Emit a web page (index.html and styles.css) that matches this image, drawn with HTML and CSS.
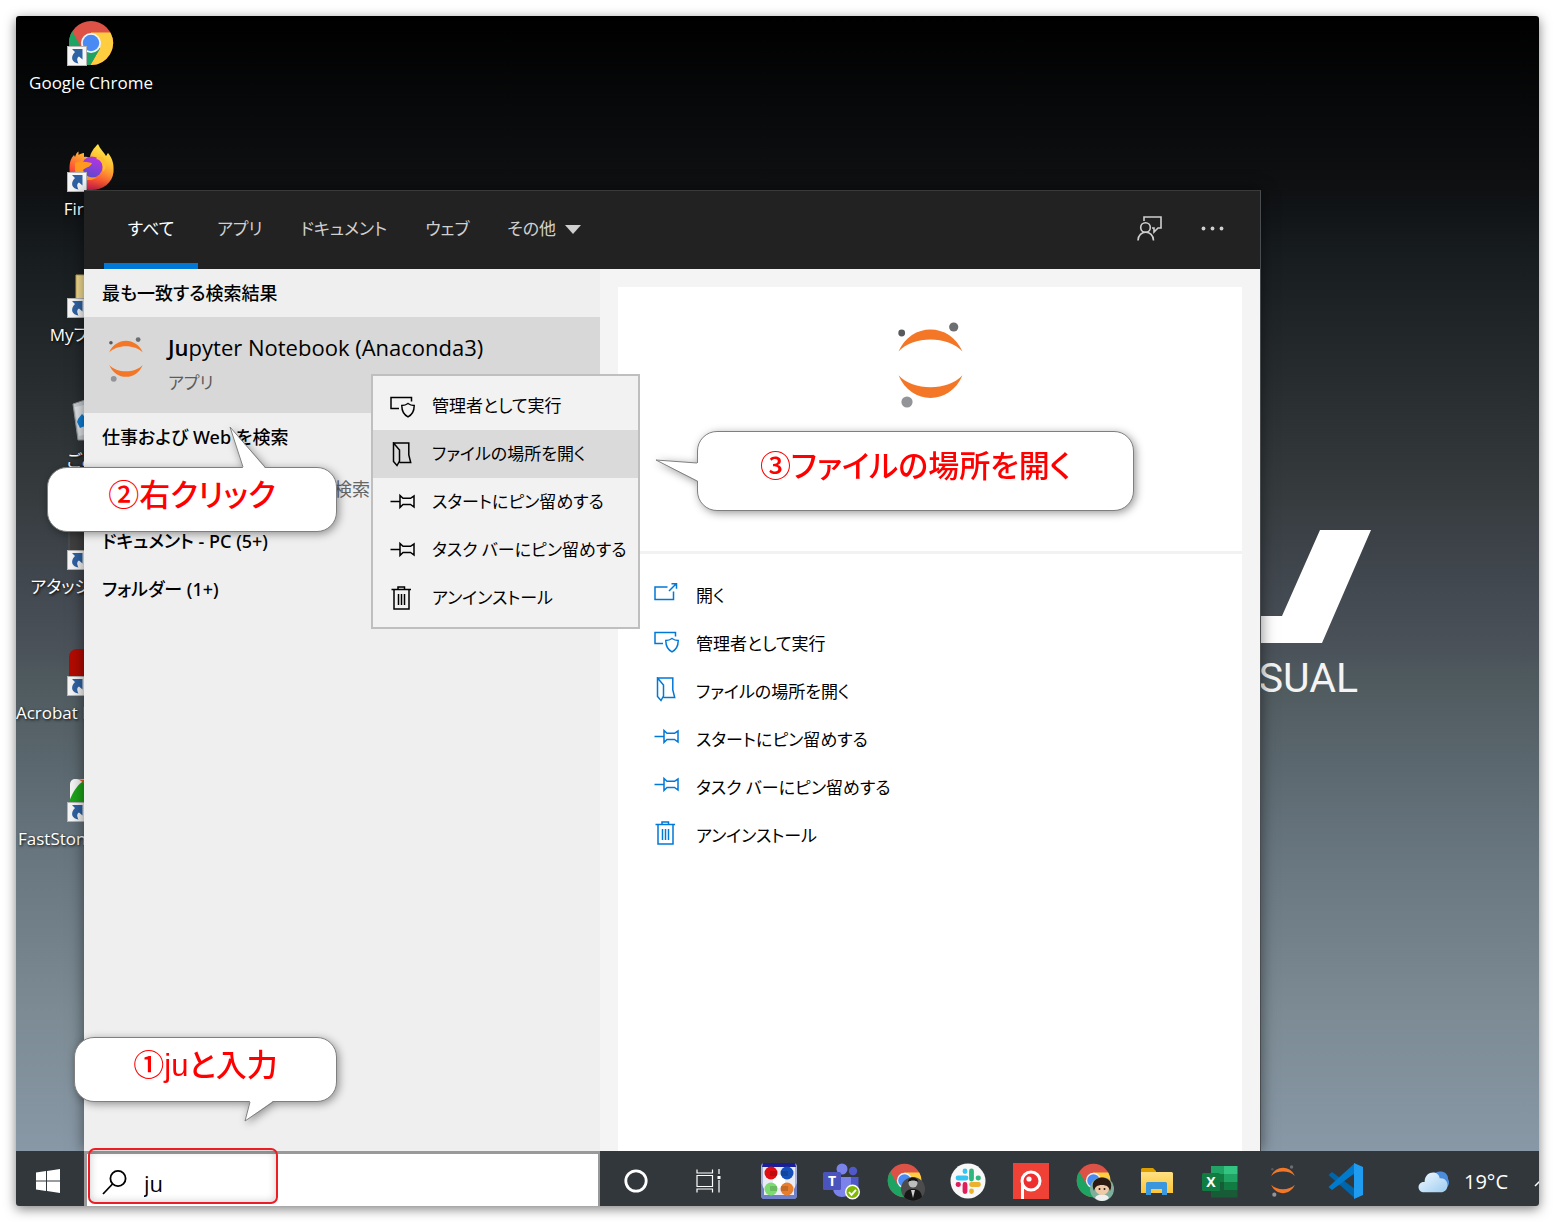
FILE: index.html
```html
<!DOCTYPE html>
<html lang="ja">
<head>
    <meta charset="UTF-8">
    <meta name="viewport" content="width=device-width, initial-scale=1.0">
    <title>Jupyter Notebook の場所を開く</title>
    <link rel="stylesheet" href="styles.css">
</head>
<body>
    <!-- Shared icons -->
    <svg class="sprite" width="0" height="0" aria-hidden="true">
        <defs>
            <linearGradient id="fox" x1="0.8" y1="0" x2="0.3" y2="1">
                <stop offset="0" stop-color="#fff44f"/>
                <stop offset="0.35" stop-color="#ffb932"/>
                <stop offset="0.7" stop-color="#ff5634"/>
                <stop offset="1" stop-color="#e0115f"/>
            </linearGradient>
            <linearGradient id="globe" x1="0.7" y1="0" x2="0.3" y2="1">
                <stop offset="0" stop-color="#b833e1"/>
                <stop offset="1" stop-color="#5b4ad0"/>
            </linearGradient>
            <linearGradient id="cloud" x1="0" y1="0" x2="1" y2="1">
                <stop offset="0" stop-color="#f2faff"/>
                <stop offset="1" stop-color="#9cccf0"/>
            </linearGradient>
            <linearGradient id="folder" x1="0" y1="0" x2="0" y2="1">
                <stop offset="0" stop-color="#ffe083"/>
                <stop offset="1" stop-color="#fcc535"/>
            </linearGradient>
        </defs>
        <symbol id="i-shortcut" viewBox="0 0 20 20">
            <rect x="0.5" y="0.5" width="19" height="19" fill="#f6f6f6" stroke="#b5b5b5"/>
            <path d="M5 3h10.500v10.500l-3.500-3c-2.500 1.500-2 4-.5 7-6-.5-9-6-3.500-11.500z" fill="#2f62a3"/>
        </symbol>
        <symbol id="i-chrome" viewBox="0 0 48 48">
            <circle cx="24" cy="24" r="23" fill="#dc5247"/>
            <path d="M44.200 13A23 23 0 0 1 23.400 47L33.500 29.500 24 24V13z" fill="#ffcd40"/>
            <path d="M23.400 47A23 23 0 0 1 4.400 12L14.500 29.500 24 24l9.500 5.500z" fill="#1da462"/>
            <circle cx="24" cy="24" r="10.500" fill="#f4f4f4"/>
            <circle cx="24" cy="24" r="8.600" fill="#4a8af4"/>
        </symbol>
        <symbol id="i-jupyter" viewBox="0 0 65 86">
            <path d="M0.500 29.500C13 0 52 0 64.500 29.500 50 13.500 15 13.500 0.500 29.500z" fill="#f37726"/>
            <path d="M0.500 53.300C13 83.600 52 83.600 64.500 53.300 50 69.300 15 69.300 0.500 53.300z" fill="#f37726"/>
            <circle cx="3.700" cy="11" r="3.400" fill="#58595b"/>
            <circle cx="55.700" cy="5" r="4.600" fill="#6d6e71"/>
            <circle cx="9" cy="80" r="5.600" fill="#929497"/>
        </symbol>
        <symbol id="i-open" viewBox="0 0 25 25">
            <path d="M13.500 6H1v12.500h18.500V10.500M15 10l7-7M17.500 2.700h5v5"/>
        </symbol>
        <symbol id="i-admin" viewBox="0 0 25 25">
            <path d="M21.500 7.500V3.500H1v11h8M18 9.500c-2 1.500-4 2-6.200 2 0 5 1.500 9 6.200 11.300 4.700-2.300 6.200-6.300 6.200-11.300-2.200 0-4.200-.5-6.200-2z"/>
        </symbol>
        <symbol id="i-location" viewBox="0 0 25 25">
            <path d="M3.500 1h15.300v12l1.900 7.500H9.500M3.500 1v18.500l3.500 4 2.500-4.500V8z"/>
        </symbol>
        <symbol id="i-pin" viewBox="0 0 25 25">
            <path d="M0.500 11.500H10M10 5.500v12l3-3h7.500l3.500 2.500V6l-3.500 2.300H13z"/>
        </symbol>
        <symbol id="i-trash" viewBox="0 0 25 25">
            <path d="M1.500 3.500h19.500M8 3.500V1h6.500v2.500M4 3.500v19.500h15v-19.500M8.500 8v11M11.500 8v11M14.500 8v11"/>
        </symbol>
    </svg>

    <div class="screen">
        <div class="desktop">
            <div class="wallpaper-logo">
                <svg width="131" height="114" viewBox="0 0 131 114"><path d="M80 0h51L82 113H0V86h42z" fill="#fff"/></svg>
                <span>VISUAL</span>
            </div>

            <ul class="shortcuts">
                <li>
                    <span class="shortcut-icon">
                        <svg width="46" height="46"><use href="#i-chrome"/></svg>
                        <svg class="arrow" width="20" height="20"><use href="#i-shortcut"/></svg>
                    </span>
                    <span>Google Chrome</span>
                </li>
                <li>
                    <span class="shortcut-icon">
                        <svg width="46" height="46" viewBox="0 0 46 46">
                            <path d="M1.500 23C1.500 16 3 12 6 9l1 2c1-3 2-5 3.500-5.500V9C12 8 14 7 16 7v4c3-1 6 1 6 1 0-5 4-10 8-14 2 5 6 8 8 12 1-1 1-2 2-3 5 6 6 12 5.500 19-1 11-11 18-22 18C10 44 1.500 35 1.500 23z" fill="url(#fox)"/>
                            <circle cx="24" cy="21" r="10.500" fill="url(#globe)"/>
                            <path d="M7 17c5-3 11-1 17 0-1 4-6 4-9 7 2 6 8 9 14 7-6 6-19 3-22-6z" fill="#ff9a1f"/>
                            <path d="M28 13c6 1 8 7 7 13 3-3 4-8 1-13-2-3-5-3-8 0z" fill="#ffbd2f"/>
                        </svg>
                        <svg class="arrow" width="20" height="20"><use href="#i-shortcut"/></svg>
                    </span>
                    <span>Firefox</span>
                </li>
                <li>
                    <span class="shortcut-icon">
                        <svg width="46" height="46" viewBox="0 0 46 46"><path d="M8 3h8l3 4h20v37H8z" fill="#f3dd92" stroke="#c9a95a"/></svg>
                        <svg class="arrow" width="20" height="20"><use href="#i-shortcut"/></svg>
                    </span>
                    <span>Myフォルダ</span>
                </li>
                <li>
                    <span class="shortcut-icon">
                        <svg width="46" height="46" viewBox="0 0 46 46">
                            <path d="M5 6l12-4 24 4-5 36H10z" fill="#c9ced2" stroke="#8e959a"/>
                            <path d="M7 9l9-2v30l-5 1z" fill="#e3e7ea"/>
                            <path d="M10 21l4-5 5 5-3 1 1 6-5 2-3-6z" fill="#0f7fd6"/>
                        </svg>
                    </span>
                    <span>ごみ箱</span>
                </li>
                <li>
                    <span class="shortcut-icon">
                        <svg width="46" height="46" viewBox="0 0 46 46"><path d="M1 3h44v40H1z" fill="#3f3f3f" stroke="#555"/></svg>
                        <svg class="arrow" width="20" height="20"><use href="#i-shortcut"/></svg>
                    </span>
                    <span>アタッシュケース</span>
                </li>
                <li>
                    <span class="shortcut-icon">
                        <svg width="46" height="46" viewBox="0 0 46 46"><rect x="1" y="-1" width="44" height="45" rx="8" fill="#b30b00"/></svg>
                        <svg class="arrow" width="20" height="20"><use href="#i-shortcut"/></svg>
                    </span>
                    <span>Acrobat Reader DC</span>
                </li>
                <li>
                    <span class="shortcut-icon">
                        <svg width="46" height="46" viewBox="0 0 46 46">
                            <rect x="2" y="3" width="42" height="42" rx="5" fill="#f5f5f5"/>
                            <path d="M1 26C5 15 10 8 17 4v22z" fill="#1da41b"/>
                            <path d="M9 3l8 1v6c-2-4-4-6-8-7z" fill="#f15a24"/>
                        </svg>
                        <svg class="arrow" width="20" height="20"><use href="#i-shortcut"/></svg>
                    </span>
                    <span>FastStone Capture</span>
                </li>
            </ul>

            <section class="search-window">
                <header class="search-header">
                    <nav class="tabs">
                        <button class="tab active">すべて</button>
                        <button class="tab">アプリ</button>
                        <button class="tab">ドキュメント</button>
                        <button class="tab">ウェブ</button>
                        <button class="tab">その他 <svg width="16" height="9" viewBox="0 0 16 9"><path d="M0 0h16L8 9z" fill="currentColor"/></svg></button>
                    </nav>
                    <button class="header-button" aria-label="フィードバック">
                        <svg width="25" height="25" viewBox="0 0 25 25" fill="none" stroke="currentColor" stroke-width="1.600">
                            <path d="M7 5V1h17v11h-3l-4 4v-4h-2"/>
                            <circle cx="8.500" cy="11.500" r="4.800"/>
                            <path d="M1 24.500c0-11 15.500-11 15.500 0"/>
                        </svg>
                    </button>
                    <button class="header-button" aria-label="オプション">
                        <svg width="23" height="5" viewBox="0 0 23 5" fill="currentColor"><circle cx="2.500" cy="2.500" r="1.900"/><circle cx="11.500" cy="2.500" r="1.900"/><circle cx="20.500" cy="2.500" r="1.900"/></svg>
                    </button>
                </header>

                <div class="search-body">
                    <div class="results">
                        <h2>最も一致する検索結果</h2>
                        <button class="best-match">
                            <svg width="34" height="45"><use href="#i-jupyter"/></svg>
                            <span class="best-text">
                                <span class="best-name"><b>Ju</b>pyter Notebook (Anaconda3)</span>
                                <span class="best-type">アプリ</span>
                            </span>
                        </button>
                        <h2>仕事および Web を検索</h2>
                        <button class="web-result">ju - 職場と Web を検索</button>
                        <h2>ドキュメント - PC (5+)</h2>
                        <h2>フォルダー (1+)</h2>
                    </div>

                    <div class="details">
                        <div class="card">
                            <div class="card-head">
                                <svg width="65" height="86"><use href="#i-jupyter"/></svg>
                            </div>
                            <ul class="actions">
                                <li><button><svg><use href="#i-open"/></svg>開く</button></li>
                                <li><button><svg><use href="#i-admin"/></svg>管理者として実行</button></li>
                                <li><button><svg><use href="#i-location"/></svg>ファイルの場所を開く</button></li>
                                <li><button><svg><use href="#i-pin"/></svg>スタートにピン留めする</button></li>
                                <li><button><svg><use href="#i-pin"/></svg>タスク バーにピン留めする</button></li>
                                <li><button><svg><use href="#i-trash"/></svg>アンインストール</button></li>
                            </ul>
                        </div>
                    </div>
                </div>

                <ul class="context-menu">
                    <li><button><svg><use href="#i-admin"/></svg>管理者として実行</button></li>
                    <li><button class="selected"><svg><use href="#i-location"/></svg>ファイルの場所を開く</button></li>
                    <li><button><svg><use href="#i-pin"/></svg>スタートにピン留めする</button></li>
                    <li><button><svg><use href="#i-pin"/></svg>タスク バーにピン留めする</button></li>
                    <li><button><svg><use href="#i-trash"/></svg>アンインストール</button></li>
                </ul>
            </section>
        </div>

        <footer class="taskbar">
            <button class="start" aria-label="スタート">
                <svg width="24" height="24" viewBox="0 0 24 24" fill="#fff"><path d="M0 3.500L10 2v9.500H0zM11 1.900L24 0v11.500H11zM0 12.500h10V22L0 20.500zM11 12.500h13V24l-13-1.900z"/></svg>
            </button>
            <label class="search-box">
                <svg width="25" height="25" viewBox="0 0 25 25" fill="none" stroke="#000" stroke-width="1.800"><circle cx="16" cy="8.500" r="7.600"/><path d="M10.500 14L1 24"/></svg>
                <input type="text" value="ju" aria-label="検索">
            </label>
            <button class="system" aria-label="Cortana">
                <svg width="24" height="24" viewBox="0 0 24 24"><circle cx="12" cy="12" r="10.200" fill="none" stroke="#fff" stroke-width="2.800"/></svg>
            </button>
            <button class="system" aria-label="タスク ビュー">
                <svg width="25" height="24" viewBox="0 0 25 24" fill="none" stroke="#fff" stroke-width="1.200"><path d="M1 0.500V4h15.500V0.500M1 6.500h15.500v11H1zM1 23.500V20h15.500v3.500M23 0v5M23 11v12.500"/><path d="M21.500 7h3v3h-3z" fill="#fff" stroke="none"/></svg>
            </button>
            <div class="apps">
                <button aria-label="ペイント">
                    <svg width="36" height="36" viewBox="0 0 36 36">
                        <rect x="1" y="1" width="34" height="34" rx="3" fill="#e9ecf6" stroke="#a9b3dc" stroke-width="2"/>
                        <path d="M2 0h32l1 4H1z" fill="#1a1f98"/>
                        <path d="M0 20l3 6v6h30v-6l3-6v12q0 4-3 4H3q-3 0-3-4z" fill="#6f80c6"/>
                        <path d="M12 12h12v13H12z" fill="#fff"/>
                        <circle cx="10" cy="10" r="6.500" fill="#e00d12"/><circle cx="26" cy="10" r="6.500" fill="#1450b8"/>
                        <circle cx="10" cy="26" r="6.500" fill="#7ddb70"/><circle cx="26" cy="26" r="6.500" fill="#e87d2c"/>
                        <path d="M9 8h7v5H9zM20 8h7v5h-7zM9 23h7v5H9zM20 23h7v5h-7z" fill="#000" opacity="0.150"/>
                    </svg>
                </button>
                <button aria-label="Teams">
                    <svg width="37" height="36" viewBox="0 0 37 36">
                        <circle cx="30" cy="8" r="4.200" fill="#5059c9"/>
                        <path d="M24 14h11.500v11c0 5-6 6-11.500 3z" fill="#5059c9"/>
                        <circle cx="19" cy="6" r="5.500" fill="#7b83eb"/>
                        <path d="M10 14h18v11c0 12-18 12-18 0z" fill="#7b83eb"/>
                        <rect x="0" y="9" width="18" height="18" rx="1.500" fill="#4b53bc"/>
                        <text x="9" y="23" text-anchor="middle" class="logo-letter">T</text>
                        <circle cx="29.500" cy="29" r="6.800" fill="#7fba00" stroke="#fff" stroke-width="1.400"/>
                        <path d="M26 29l2.500 2.800 4.500-5" fill="none" stroke="#fff" stroke-width="1.800"/>
                    </svg>
                </button>
                <button aria-label="Chrome 仕事用">
                    <svg width="36" height="36" viewBox="0 0 36 36">
                        <use href="#i-chrome" width="35" height="35"/>
                        <circle cx="26" cy="26" r="12" fill="#4c4c4c"/>
                        <path d="M17 34c1-6 4-8 9-8s8 2 9 8c-6 5-12 5-18 0z" fill="#161616"/>
                        <circle cx="26" cy="20" r="4.500" fill="#bdbdbd"/>
                        <path d="M21 19c0-6 10-6 10 0-3-2-7-2-10 0z" fill="#111"/>
                        <path d="M24 27h4l-2 8z" fill="#d2d2d2"/>
                    </svg>
                </button>
                <button aria-label="Slack">
                    <svg width="36" height="36" viewBox="0 0 36 36">
                        <circle cx="18" cy="18" r="17.500" fill="#f8f8f8"/>
                        <g fill="none" stroke-width="4.800" stroke-linecap="round">
                            <path d="M8 15h8M15 8v.5" stroke="#36c5f0"/>
                            <path d="M21.500 8v8M28 15h.5" stroke="#2eb67d"/>
                            <path d="M21.500 21.500h7M21.500 28v.5" stroke="#ecb22e"/>
                            <path d="M15 21.500v7M8 21.500h.5" stroke="#e01e5a"/>
                        </g>
                    </svg>
                </button>
                <button aria-label="PicPick">
                    <svg width="36" height="36" viewBox="0 0 36 36">
                        <path d="M0 0h36v36H0z" fill="#ef4136"/>
                        <path d="M9.500 36V18" fill="none" stroke="#fff" stroke-width="3"/>
                        <circle cx="18" cy="18" r="9" fill="#ef2f2f" stroke="#fff" stroke-width="3"/>
                        <circle cx="16" cy="16" r="2.600" fill="#fff"/>
                    </svg>
                </button>
                <button aria-label="Chrome 個人用">
                    <svg width="36" height="36" viewBox="0 0 36 36">
                        <use href="#i-chrome" width="35" height="35"/>
                        <circle cx="26" cy="26" r="12" fill="#7fae9d"/>
                        <path d="M19 35c2-5 12-5 14 0-4 4-10 4-14 0z" fill="#efefef"/>
                        <circle cx="26" cy="25" r="7" fill="#f0c9a8"/>
                        <path d="M17 25c-3-14 21-14 18 0l-1 3c-1-4-3-6-8-6s-7 2-8 6z" fill="#2c1a12"/>
                        <circle cx="23.500" cy="26" r="1" fill="#2c1a12"/><circle cx="28.500" cy="26" r="1" fill="#2c1a12"/>
                    </svg>
                </button>
                <button aria-label="エクスプローラー">
                    <svg width="32" height="27" viewBox="0 0 32 27">
                        <path d="M0 1.500Q0 0 1.500 0H12l3 3v5H0z" fill="#dd9f00"/>
                        <path d="M0 4h30.500Q32 4 32 5.500V25H0z" fill="url(#folder)"/>
                        <path d="M5 27V15.500Q5 14 6.500 14h18q1.500 0 1.500 1.500V27h-5v-6H10v6z" fill="#3a96dd"/>
                    </svg>
                </button>
                <button aria-label="Excel">
                    <svg width="36" height="33" viewBox="0 0 36 33">
                        <path d="M9 1h14v8H9z" fill="#21a366"/><path d="M22 1h13.500v8H22z" fill="#33c481"/>
                        <path d="M9 9h14v8H9z" fill="#107c41"/><path d="M22 9h13.500v8H22z" fill="#21a366"/>
                        <path d="M9 17h14v8H9z" fill="#185c37"/><path d="M22 17h13.500v8H22z" fill="#107c41"/>
                        <path d="M9 25h26.500v7.500H9z" fill="#185c37"/>
                        <rect x="0" y="8" width="18" height="18" rx="1.500" fill="#107c41"/>
                        <text x="9" y="22" text-anchor="middle" class="logo-letter">X</text>
                    </svg>
                </button>
                <button aria-label="Jupyter Notebook">
                    <svg width="24" height="32"><use href="#i-jupyter"/></svg>
                </button>
                <button aria-label="Visual Studio Code">
                    <svg width="36" height="36" viewBox="0 0 36 36">
                        <path d="M0.500 12l3.500-3 23 17v9.500z" fill="#0065a9"/>
                        <path d="M0.500 24l3.500 3 23-17V0z" fill="#007acc"/>
                        <path d="M26 0l9 4v28l-9 4z" fill="#1f9cf0"/>
                    </svg>
                </button>
            </div>
            <div class="tray">
                <svg width="32" height="24" viewBox="0 0 34 24">
                    <path d="M16 5c3-6 16-6 16 4 2 3 1 7-2 9L20 16z" fill="#4b8ddb"/>
                    <path d="M7 23C-2 23-1 11 7 12 7 0 22-1 23 8c11-1 11 15 1 15z" fill="url(#cloud)"/>
                </svg>
                <span>19°C</span>
                <svg class="chevron" width="16" height="9" viewBox="0 0 16 9"><path d="M1 8l7-7 7 7" fill="none" stroke="#fff" stroke-width="1.500"/></svg>
            </div>
        </footer>

        <!-- Step annotations -->
        <div class="callout step-one">
            <svg width="32" height="22" viewBox="0 0 32 22"><path d="M6 0L1 20 29 0z" fill="#fff"/><path d="M6 1L1 20 29 1" fill="none" stroke="#7f7f7f"/></svg>
            ①juと入力
        </div>
        <div class="callout step-two">
            <svg width="38" height="42" viewBox="0 0 38 42"><path d="M14 42L1 1 36 42z" fill="#fff"/><path d="M14 41L1 1 36 41" fill="none" stroke="#7f7f7f"/></svg>
            ②右クリック
        </div>
        <div class="callout step-three">
            <svg width="43" height="24" viewBox="0 0 43 24"><path d="M43 4L1 1 43 22z" fill="#fff"/><path d="M42 4L1 1 42 22" fill="none" stroke="#7f7f7f"/></svg>
            ③ファイルの場所を開く
        </div>
        <div class="highlight"></div>
    </div>
</body>
</html>
```

FILE: styles.css
```css
* {
    box-sizing: border-box;
}
body {
    margin: 0;
    padding: 16px;
    min-height: 100vh;
    display: flex;
    background: #fff;
    font-family: "Open Sans", "Noto Sans CJK JP", sans-serif;
    font-feature-settings: "palt";
    font-size: 18px;
    line-height: 28px;
    color: #000;
}
button, input {
    font: inherit;
    font-feature-settings: inherit;
    color: inherit;
    background: none;
    border: none;
    padding: 0;
    text-align: left;
}
ul {
    list-style: none;
    margin: 0;
    padding: 0;
}
svg {
    display: block;
    flex-shrink: 0;
    overflow: visible;
}
.sprite {
    position: absolute;
}
.screen {
    position: relative;
    flex: 1;
    min-width: 0;
    display: flex;
    flex-direction: column;
    border-radius: 3px;
    box-shadow: 0 3px 12px rgba(0, 0, 0, 0.5);
}

/* Desktop */
.desktop {
    position: relative;
    flex: 1;
    overflow: hidden;
    border-radius: 3px 3px 0 0;
    background: linear-gradient(#000 0%, #0e1012 15%, #171c1f 21%, #373d3f 43%, #3b4147 46%, #4b525a 56%, #4e595d 58%, #687680 74%, #7c8b94 88%, #8898a6 100%);
}
.wallpaper-logo {
    position: absolute;
    top: 514px;
    right: 168px;
    display: flex;
    flex-direction: column;
    align-items: flex-end;
    gap: 10px;
}
.wallpaper-logo span {
    padding-right: 13px;
    font-family: Roboto, sans-serif;
    font-size: 41px;
    line-height: 48px;
    color: #f4f4f4;
}
.shortcuts {
    width: 150px;
}
.shortcuts li {
    height: 126px;
    padding-top: 4px;
    display: flex;
    flex-direction: column;
    align-items: center;
    gap: 3px;
    font-size: 17px;
    color: #fff;
    white-space: nowrap;
    text-shadow: 1px 1px 3px #000;
}
.shortcut-icon {
    position: relative;
}
.shortcut-icon .arrow {
    position: absolute;
    left: -1px;
    bottom: 0;
}

/* Search window */
.search-window {
    position: absolute;
    top: 174px;
    left: 68px;
    right: 278px;
    bottom: 0;
    display: flex;
    flex-direction: column;
    border-top: 1px solid #3a3a3a;
    border-right: 1px solid #4a4d50;
    box-shadow: 0 0 14px rgba(0, 0, 0, 0.5);
}
.search-header {
    height: 78px;
    padding: 0 36px 0 20px;
    display: flex;
    align-items: center;
    gap: 39px;
    background: #222;
    color: #d0d0d0;
}
.header-button {
    padding-bottom: 4px;
}
.tabs {
    flex: 1;
    align-self: stretch;
    display: flex;
}
.tab {
    display: flex;
    align-items: center;
    justify-content: center;
    gap: 9px;
    padding: 4px 19px 0;
    border-bottom: 6px solid transparent;
    font-size: 17px;
}
.tab.active {
    min-width: 94px;
    color: #fff;
    border-color: #0078d7;
}
.search-body {
    flex: 1;
    display: flex;
}
.results {
    width: 516px;
    background: #efefef;
}
.results h2 {
    margin: 0;
    padding: 10px 18px;
    font-family: "Noto Sans", "Noto Sans CJK JP", sans-serif;
    font-size: 18px;
    font-weight: 500;
}
.best-match {
    width: 100%;
    height: 96px;
    padding: 0 25px 11px;
    display: flex;
    align-items: center;
    gap: 25px;
    background: #d8d8d8;
}
.best-text {
    display: flex;
    flex-direction: column;
    gap: 8px;
    padding-top: 10px;
}
.best-name {
    font-size: 22px;
}
.best-name b {
    font-weight: 600;
}
.best-type {
    font-size: 17px;
    color: #5c5c5c;
}
.web-result {
    display: block;
    width: 100%;
    padding: 14px 230px 14px 0;
    text-align: right;
    color: #666;
}
.details {
    flex: 1;
    padding: 18px 18px 0;
    display: flex;
    background: #f4f4f4;
}
.card {
    flex: 1;
    background: #fff;
}
.card-head {
    height: 267px;
    padding-top: 35px;
    display: flex;
    justify-content: center;
    border-bottom: 3px solid #f2f2f2;
}
.actions {
    padding: 18px 36px;
}
.actions button, .context-menu button {
    width: 100%;
    height: 48px;
    display: flex;
    align-items: center;
    gap: 17px;
    font-size: 17px;
}
.actions svg, .context-menu svg {
    width: 25px;
    height: 25px;
    fill: none;
    stroke: currentColor;
    stroke-width: 1.5px;
}
.actions svg {
    margin-bottom: 6px;
    color: #0078d7;
}
.context-menu {
    position: absolute;
    top: 183px;
    left: 287px;
    width: 269px;
    padding: 6px 0 5px;
    border: 2px solid #bfbfbf;
    background: #f2f2f2;
}
.context-menu button {
    padding-left: 17px;
}
.context-menu .selected {
    background: #dadada;
}

/* Taskbar */
.taskbar {
    height: 55px;
    display: flex;
    background: #32373b;
    border-radius: 0 0 3px 3px;
    overflow: hidden;
    color: #fff;
}
.start, .system, .apps button {
    display: flex;
    align-items: center;
    justify-content: center;
    padding-top: 5px;
}
.start {
    width: 68px;
    padding-right: 4px;
}
.search-box {
    width: 516px;
    padding: 5px 0 0 15px;
    display: flex;
    align-items: center;
    gap: 17px;
    background: #fff;
    border: solid #999;
    border-width: 3px 2px 0 3px;
    color: #000;
}
.search-box input {
    flex: 1;
    min-width: 0;
    font-size: 22px;
    outline: none;
}
.system {
    width: 72px;
}
.apps {
    display: flex;
    padding-left: 3px;
}
.apps button {
    width: 63px;
}
.logo-letter {
    font: bold 14px "Open Sans", sans-serif;
    fill: #fff;
}
.tray {
    margin-left: auto;
    margin-right: -11px;
    display: flex;
    align-items: center;
    gap: 14px;
    padding-top: 7px;
    font-size: 20px;
}
.chevron {
    margin-left: 12px;
}

/* Annotations */
.callout {
    position: absolute;
    height: 65px;
    padding-top: 8px;
    border: 1px solid #7f7f7f;
    border-radius: 20px;
    background: #fff;
    filter: drop-shadow(2px 2px 4px rgba(0, 0, 0, 0.4));
    color: #f00;
    font-family: "Liberation Sans", "Noto Sans CJK JP", sans-serif;
    font-size: 31px;
    font-weight: 500;
    line-height: 40px;
    text-align: center;
}
.callout svg {
    position: absolute;
}
.step-one {
    left: 58px;
    bottom: 104px;
    width: 263px;
}
.step-one svg {
    left: 169px;
    top: 63px;
}
.step-two {
    left: 31px;
    top: 451px;
    width: 290px;
}
.step-two svg {
    left: 181px;
    bottom: 63px;
}
.step-three {
    left: 681px;
    top: 415px;
    width: 437px;
    height: 80px;
    padding-top: 15px;
}
.step-three svg {
    right: 435px;
    top: 27px;
}
.highlight {
    position: absolute;
    left: 72px;
    bottom: 2px;
    width: 190px;
    height: 56px;
    border: 2px solid #ee1c25;
    border-radius: 7px;
    box-shadow: inset 0 0 8px rgba(0, 0, 0, 0.2);
    pointer-events: none;
}
```
